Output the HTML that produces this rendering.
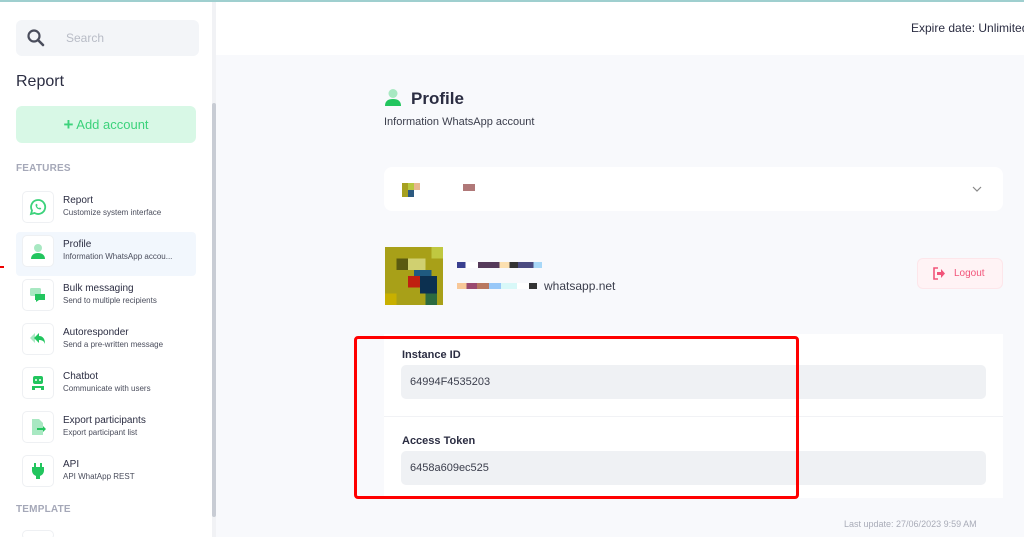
<!DOCTYPE html>
<html style="width:1024px;height:537px;overflow:hidden"><head><meta charset="utf-8"><style>
*{box-sizing:border-box;margin:0;padding:0}
body{width:1024px;height:537px;overflow:hidden;background:#f8f9fc;font-family:"Liberation Sans",sans-serif;position:relative;color:#2b2d42}
.teal{position:absolute;left:0;top:0;width:1024px;height:2px;background:#9fcfcf}
.side{position:absolute;left:0;top:2px;width:212px;height:535px;background:#fff;overflow:hidden}
.sb{position:absolute;left:212px;top:103px;width:4px;height:414px;background:#c8ccd4;border-radius:2px}
.sbtrack{position:absolute;left:212px;top:2px;width:4px;height:535px;background:#f1f2f5}
.search{position:absolute;left:16px;top:18px;width:183px;height:36px;background:#f3f5f8;border-radius:6px}
.search span{position:absolute;left:50px;top:11px;font-size:12px;color:#b8bcc6}
.rep{position:absolute;left:16px;top:71px;font-size:16px;color:#2b2d42}
.add{position:absolute;left:16px;top:104px;width:180px;height:37px;background:#d8f8e6;border-radius:6px;color:#3cd27b;font-size:13px;text-align:center;line-height:37px}
.cap{position:absolute;left:16px;font-size:10px;color:#a5a8b8;font-weight:bold;letter-spacing:.2px}
.item{position:absolute;left:16px;width:180px;height:44px}
.item.act{background:#f2f7fd;border-radius:4px}
.ib{position:absolute;left:6px;top:3px;width:32px;height:32px;border:1px solid #eef0f3;border-radius:5px;background:#fff;display:flex;align-items:center;justify-content:center}
.t1{position:absolute;left:47px;top:7px;font-size:10px;color:#2b2d42}
.t2{position:absolute;left:47px;top:20px;font-size:8px;color:#4a4d5c;white-space:nowrap}
.head{position:absolute;left:216px;top:2px;width:808px;height:53px;background:#fff;overflow:hidden}
.head span{position:absolute;left:695px;top:19px;font-size:12px;color:#2b2d42;white-space:nowrap}
.ptitle{position:absolute;left:411px;top:89px;font-size:17px;font-weight:bold;color:#2b2d42}
.psub{position:absolute;left:384px;top:116px;font-size:11px;color:#3b3e4c}
.sel{position:absolute;left:384px;top:167px;width:619px;height:44px;background:#fff;border-radius:8px}
.px{position:absolute}
.logout{position:absolute;left:917px;top:258px;width:86px;height:31px;background:#fff3f5;border:1px solid #fde6ea;border-radius:6px;color:#f2547a;font-size:10px;line-height:29px;padding-left:36px}
.card{position:absolute;left:384px;top:334px;width:619px;height:164px;background:#fff}
.lab{position:absolute;left:402px;font-size:11px;font-weight:bold;color:#2b2d42}
.inp{position:absolute;left:401px;width:585px;height:34px;background:#eff1f4;border-radius:5px;font-size:11px;color:#3b3e4c;padding-left:9px;line-height:34px}
.red{position:absolute;left:354px;top:336px;width:445px;height:163px;border:3px solid #ff0000;border-radius:4px}
.last{position:absolute;left:844px;top:519px;font-size:9px;color:#a9acb8}
</style></head><body>
<div class="teal"></div>
<div class="side">
<div class="search"><svg style="position:absolute;left:10px;top:8px" width="20" height="20" viewBox="0 0 20 20"><circle cx="8" cy="8" r="5.5" fill="none" stroke="#4a4d5c" stroke-width="2.2"/><path d="M12 12l5 5" stroke="#4a4d5c" stroke-width="2.6" stroke-linecap="round"/></svg><span>Search</span></div>
<div class="rep">Report</div>
<div class="add"><b style="font-size:17px;vertical-align:-1px">+</b> Add account</div>
<div class="cap" style="top:161px">FEATURES</div>
<div class="item" style="top:186px"><div class="ib"><svg width="18" height="18" viewBox="0 0 18 18"><path d="M9 2a7 7 0 0 0-6 10.5L2 16l3.6-1A7 7 0 1 0 9 2z" fill="none" stroke="#3cd27b" stroke-width="1.8"/><path d="M6.5 6.5c0 3 2 5 5 5l.8-1.3-1.5-.7-.8.6c-1-.5-1.6-1.1-2-2l.6-.8-.7-1.5z" fill="#3cd27b"/></svg></div><div class="t1">Report</div><div class="t2">Customize system interface</div></div>
<div class="item act" style="top:230px"><div class="ib"><svg width="18" height="18" viewBox="0 0 18 18"><circle cx="9" cy="6" r="4" fill="#a8e8c2"/><path d="M2 17c0-4 3-6 7-6s7 2 7 6z" fill="#22c55e"/></svg></div><div class="t1">Profile</div><div class="t2">Information WhatsApp accou...</div></div>
<div class="item" style="top:274px"><div class="ib"><svg width="18" height="18" viewBox="0 0 18 18"><rect x="1" y="2" width="11" height="8" rx="1.5" fill="#a8e8c2"/><path d="M6 8h10v6h-6l-3 2v-2H6z" fill="#22c55e"/></svg></div><div class="t1">Bulk messaging</div><div class="t2">Send to multiple recipients</div></div>
<div class="item" style="top:318px"><div class="ib"><svg width="18" height="18" viewBox="0 0 18 18"><path d="M6 3L1 8l5 5z" fill="#a8e8c2"/><path d="M10 3L5 8l5 5V10c3 0 5 1 6 4 0-5-2-8-6-8z" fill="#22c55e"/></svg></div><div class="t1">Autoresponder</div><div class="t2">Send a pre-written message</div></div>
<div class="item" style="top:362px"><div class="ib"><svg width="18" height="18" viewBox="0 0 18 18"><rect x="4" y="2" width="10" height="8" rx="2" fill="#22c55e"/><circle cx="7" cy="6" r="1" fill="#fff"/><circle cx="11" cy="6" r="1" fill="#fff"/><path d="M3 12h12v4h-3v-2H6v2H3z" fill="#22c55e"/></svg></div><div class="t1">Chatbot</div><div class="t2">Communicate with users</div></div>
<div class="item" style="top:406px"><div class="ib"><svg width="18" height="18" viewBox="0 0 18 18"><path d="M3 1h7l4 4v12H3z" fill="#a8e8c2"/><path d="M8 10h6V8l3 3-3 3v-2H8z" fill="#22c55e"/></svg></div><div class="t1">Export participants</div><div class="t2">Export participant list</div></div>
<div class="item" style="top:450px"><div class="ib"><svg width="18" height="18" viewBox="0 0 18 18"><path d="M6 1v4M12 1v4" stroke="#22c55e" stroke-width="2"/><path d="M3 5h12v4a6 6 0 0 1-4 5v3H7v-3a6 6 0 0 1-4-5z" fill="#22c55e"/></svg></div><div class="t1">API</div><div class="t2">API WhatApp REST</div></div>
<div class="cap" style="top:502px">TEMPLATE</div>
<div style="position:absolute;left:22px;top:528px;width:32px;height:10px;border:1px solid #eef0f3;border-radius:5px"></div>
</div>
<div class="sbtrack"></div><div class="sb"></div>
<div style="position:absolute;left:0;top:266px;width:4px;height:2px;background:#e00"></div>
<div class="head"><span>Expire date: Unlimited</span></div>
<svg style="position:absolute;left:384px;top:88px" width="18" height="18" viewBox="0 0 18 18"><circle cx="9" cy="5.5" r="4.5" fill="#a8e8c2"/><path d="M1 18c0-5 3-7 8-7s8 2 8 7z" fill="#22c55e"/></svg>
<div class="ptitle">Profile</div>
<div class="psub">Information WhatsApp account</div>
<div class="sel">
<div class="px" style="left:18px;top:16px;width:6px;height:14px;background:#a6a020"></div><div class="px" style="left:24px;top:16px;width:6px;height:7px;background:#b8c840"></div><div class="px" style="left:30px;top:16px;width:6px;height:7px;background:#e8b890"></div><div class="px" style="left:24px;top:23px;width:6px;height:7px;background:#2c5a80"></div>
<div class="px" style="left:79px;top:17px;width:12px;height:7px;background:#b07878"></div>
<svg style="position:absolute;left:588px;top:19px" width="10" height="6" viewBox="0 0 10 6"><path d="M1 1l4 4 4-4" fill="none" stroke="#888" stroke-width="1.2"/></svg>
</div>
<svg style="position:absolute;left:384px;top:247px" width="60" height="58" viewBox="0 0 10 10" shape-rendering="crispEdges">
<rect width="10" height="10" fill="#a8a018"/><rect x="2" y="2" width="2" height="2" fill="#5a5a10"/><rect x="4" y="2" width="3" height="2" fill="#d0d070"/><rect x="5" y="4" width="3" height="2" fill="#1f5a80"/><rect x="4" y="5" width="2" height="2" fill="#c02010"/><rect x="6" y="5" width="3" height="3" fill="#0c3050"/><rect x="7" y="8" width="2" height="2" fill="#2c6a40"/><rect x="0" y="8" width="2" height="2" fill="#c8b000"/><rect x="8" y="0" width="2" height="2" fill="#c0c840"/></svg>
<div class="px" style="left:457px;top:262px;width:85px;height:6px;background:linear-gradient(90deg,#3a4090 0 10%,#fff 10% 25%,#553a5a 25% 50%,#fce0b0 50% 62%,#333 62% 72%,#4a4a80 72% 90%,#a8d8f8 90%)"></div>
<div class="px" style="left:457px;top:283px;width:80px;height:6px;background:linear-gradient(90deg,#f8c898 0 12%,#9a4a70 12% 25%,#b87860 25% 40%,#98c8f8 40% 55%,#d8f8f8 55% 75%,#fff 75% 90%,#333 90%)"></div>
<div style="position:absolute;left:544px;top:279px;font-size:12px;color:#3b3e4c">whatsapp.net</div>
<div class="logout"><svg style="position:absolute;left:15px;top:8px" width="13" height="13" viewBox="0 0 13 13"><path d="M5 1H1v11h4" fill="none" stroke="#f2547a" stroke-width="1.6"/><path d="M4 5h4V2l4 4.5L8 11V8H4z" fill="#f2547a"/></svg>Logout</div>
<div class="card"><div style="position:absolute;left:0;top:82px;width:619px;height:1px;background:#f1f2f5"></div></div>
<div class="lab" style="top:349px">Instance ID</div>
<div class="inp" style="top:365px">64994F4535203</div>
<div class="lab" style="top:435px">Access Token</div>
<div class="inp" style="top:451px">6458a609ec525</div>
<div class="red"></div>
<div class="last">Last update: 27/06/2023 9:59 AM</div>
</body></html>
